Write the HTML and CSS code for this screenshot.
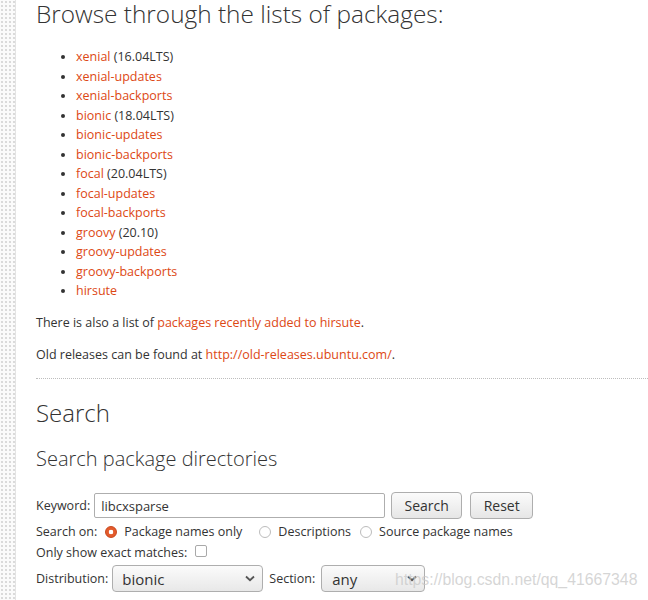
FILE: index.html
```html
<!DOCTYPE html>
<html lang="en">
<head>
    <meta charset="UTF-8">
    <title>Ubuntu – Ubuntu Packages Search</title>
    <link rel="stylesheet" href="styles.css">
</head>
<body>
    <div class="page">
        <div class="strip"></div>
        <div class="content">
            <h1>Browse through the lists of packages:</h1>
            <ul class="dists">
                <li><a href="#">xenial</a> (16.04LTS)</li>
                <li><a href="#">xenial-updates</a></li>
                <li><a href="#">xenial-backports</a></li>
                <li><a href="#">bionic</a> (18.04LTS)</li>
                <li><a href="#">bionic-updates</a></li>
                <li><a href="#">bionic-backports</a></li>
                <li><a href="#">focal</a> (20.04LTS)</li>
                <li><a href="#">focal-updates</a></li>
                <li><a href="#">focal-backports</a></li>
                <li><a href="#">groovy</a> (20.10)</li>
                <li><a href="#">groovy-updates</a></li>
                <li><a href="#">groovy-backports</a></li>
                <li><a href="#">hirsute</a></li>
            </ul>
            <p>There is also a list of <a href="#">packages recently added to hirsute</a>.</p>
            <p>Old releases can be found at <a href="#">http://old-releases.ubuntu.com/</a>.</p>
            <hr>
            <h2>Search</h2>
            <h3>Search package directories</h3>
            <form class="search">
                <div class="row row-keyword">
                    <label for="kw">Keyword:</label>
                    <input type="text" id="kw" class="keyword" value="libcxsparse">
                    <button type="button" class="btn btn-search">Search</button>
                    <button type="reset" class="btn btn-reset">Reset</button>
                </div>
                <div class="row row-on">
                    <span class="label">Search on:</span>
                    <input type="radio" name="on" id="on-names" checked>
                    <label for="on-names" class="opt-names">Package names only</label>
                    <input type="radio" name="on" id="on-desc">
                    <label for="on-desc" class="opt-desc">Descriptions</label>
                    <input type="radio" name="on" id="on-src">
                    <label for="on-src">Source package names</label>
                </div>
                <div class="row row-exact">
                    <label for="exact">Only show exact matches:</label>
                    <input type="checkbox" id="exact">
                </div>
                <div class="row row-dist">
                    <label for="dist">Distribution:</label>
                    <span class="select select-dist">
                        <select id="dist">
                            <option>bionic</option>
                        </select>
                        <svg class="chevron" width="10" height="7" viewBox="0 0 10 7"><path d="M1 1.5 5 5.2 9 1.5" fill="none" stroke="#555" stroke-width="1.8"/></svg>
                    </span>
                    <label for="section" class="section-label">Section:</label>
                    <span class="select select-section">
                        <select id="section">
                            <option>any</option>
                        </select>
                        <svg class="chevron" width="10" height="7" viewBox="0 0 10 7"><path d="M1 1.5 5 5.2 9 1.5" fill="none" stroke="#555" stroke-width="1.8"/></svg>
                    </span>
                </div>
            </form>
        </div>
    </div>
    <div class="watermark">https://blog.csdn.net/qq_41667348</div>
</body>
</html>
```

FILE: styles.css
```css
:root {
    --text: #333333;
    --link: #dd4814;
    --border: #aeaeae;
}

* {
    box-sizing: border-box;
}

body {
    margin: 0;
    font-family: "Open Sans", "DejaVu Sans", sans-serif;
    font-size: 12.5px;
    color: var(--text);
    background: #fff;
    overflow: hidden;
}

a {
    color: var(--link);
    text-decoration: none;
}

.page {
    display: flex;
    min-height: 100vh;
}

.strip {
    width: 16px;
    flex-shrink: 0;
    background-color: #fbfbfb;
    background-image: radial-gradient(circle, #cfcfcf 0.6px, transparent 1px);
    background-size: 4px 4px;
    background-position: 0 0;
    border-right: 1px solid #e4e4e4;
}

.content {
    flex: 1;
    padding-left: 20px;
}

h1 {
    margin: 0;
    font-size: 24.4px;
    font-weight: 300;
    line-height: 28px;
}

.dists {
    margin: 19px 0 0;
    padding-left: 40px;
    line-height: 19.5px;
}

p {
    margin: 12.5px 0 0;
    line-height: 19.5px;
}

hr {
    margin: 13px 0 0;
    border: 0;
    border-top: 1px dotted #bdbdbd;
}

h2 {
    margin: 19px 0 0;
    font-size: 24px;
    font-weight: 300;
    line-height: 30px;
}

h3 {
    margin: 18px 0 0;
    font-size: 20px;
    font-weight: 300;
    line-height: 26px;
}

.search {
    margin-top: 20px;
}

.row {
    display: flex;
    align-items: center;
}

.row-keyword {
    height: 28px;
    gap: 4px;
}

.keyword {
    width: 291px;
    height: 25px;
    border: 1px solid var(--border);
    border-radius: 2px;
    padding: 0 6px;
    font: inherit;
    font-size: 13px;
    color: var(--text);
}

.btn {
    height: 27px;
    border: 1px solid var(--border);
    border-radius: 4px;
    background: linear-gradient(#fbfbfb, #e6e6e6);
    font: inherit;
    font-size: 14px;
    color: var(--text);
    padding: 0;
}

.btn-search {
    width: 71px;
    margin-left: 2px;
}

.btn-reset {
    width: 63px;
    margin-left: 4px;
}

.row-on {
    height: 22px;
    margin-top: 1px;
}

.row-on input {
    appearance: none;
    width: 12px;
    height: 12px;
    margin: 0 7px 0 8px;
    border: 1px solid #bcbcbc;
    border-radius: 50%;
    background: #fff;
}

.row-on input:checked {
    border-color: #c9461b;
    background: radial-gradient(circle, #fff 0 2px, #e35b2c 2.6px);
}

.opt-names {
    margin-right: 9px;
}

.opt-desc {
    margin-right: 1px;
}

.row-exact {
    height: 20px;
}

.row-exact input {
    appearance: none;
    width: 12px;
    height: 12px;
    margin: 0 0 4px 8px;
    border: 1px solid #a9a9a9;
    border-radius: 2px;
    background: #fff;
}

.row-dist {
    height: 28px;
    margin-top: 2px;
    gap: 4px;
}

.section-label {
    margin-left: 2px;
}

.select {
    position: relative;
    display: inline-flex;
}

.select select {
    appearance: none;
    height: 27px;
    border: 1px solid var(--border);
    border-radius: 4px;
    background: linear-gradient(#fbfbfb, #e8e8e8);
    font: inherit;
    font-size: 15px;
    color: var(--text);
    padding: 0 0 0 9px;
}

.select-dist select {
    width: 151px;
}

.select-section {
    margin-left: 2px;
}

.select-section select {
    width: 104px;
    padding-left: 10px;
}

.chevron {
    position: absolute;
    right: 8px;
    top: 10px;
    pointer-events: none;
}

.watermark {
    position: absolute;
    left: 395px;
    top: 571px;
    font-family: "Liberation Sans", Arial, sans-serif;
    font-size: 15.8px;
    color: rgba(200, 200, 200, 0.75);
    pointer-events: none;
}
```
